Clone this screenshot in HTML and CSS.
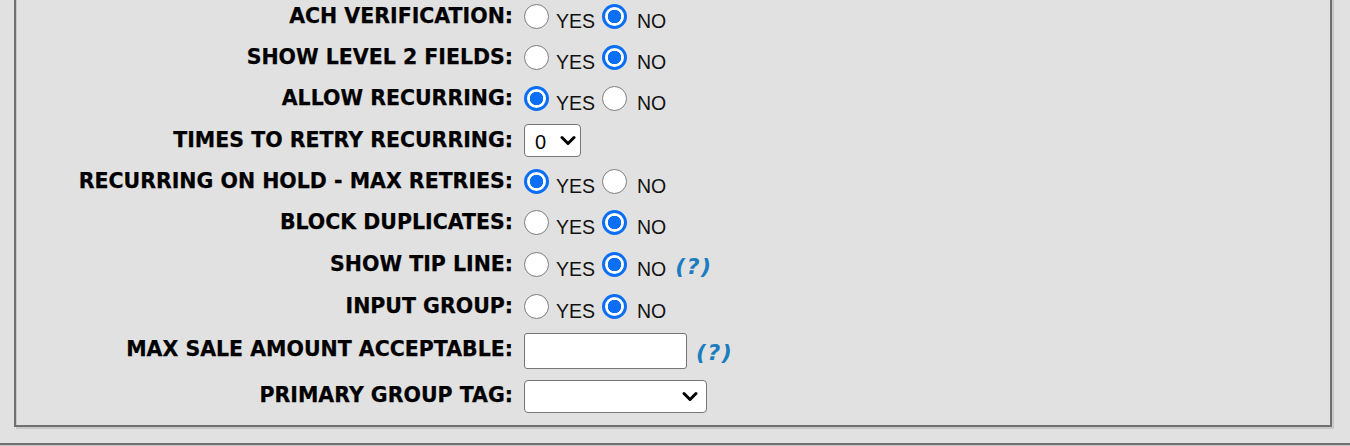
FILE: index.html
```html
<!DOCTYPE html>
<html>
<head>
<meta charset="utf-8">
<link rel="stylesheet" href="styles.css">
</head>
<body>
<div class="panel">
  <div class="form">
    <div class="label">ACH VERIFICATION:</div>
    <div class="ctrl"><input type="radio" name="ach" class="r-yes"><span class="opt">YES</span><input type="radio" name="ach" class="r-no" checked><span class="opt">NO</span></div>

    <div class="label">SHOW LEVEL 2 FIELDS:</div>
    <div class="ctrl"><input type="radio" name="l2" class="r-yes"><span class="opt">YES</span><input type="radio" name="l2" class="r-no" checked><span class="opt">NO</span></div>

    <div class="label">ALLOW RECURRING:</div>
    <div class="ctrl"><input type="radio" name="ar" class="r-yes" checked><span class="opt">YES</span><input type="radio" name="ar" class="r-no"><span class="opt">NO</span></div>

    <div class="label">TIMES TO RETRY RECURRING:</div>
    <div class="ctrl"><span class="sel sel-small"><select><option>0</option></select><svg class="chev" viewBox="0 0 16 11" width="16" height="11"><path d="M2 2.5 L8 8.5 L14 2.5" fill="none" stroke="#000" stroke-width="3" stroke-linecap="round" stroke-linejoin="round"/></svg></span></div>

    <div class="label">RECURRING ON HOLD - MAX RETRIES:</div>
    <div class="ctrl"><input type="radio" name="oh" class="r-yes" checked><span class="opt">YES</span><input type="radio" name="oh" class="r-no"><span class="opt">NO</span></div>

    <div class="label">BLOCK DUPLICATES:</div>
    <div class="ctrl"><input type="radio" name="bd" class="r-yes"><span class="opt">YES</span><input type="radio" name="bd" class="r-no" checked><span class="opt">NO</span></div>

    <div class="label">SHOW TIP LINE:</div>
    <div class="ctrl"><input type="radio" name="tl" class="r-yes"><span class="opt">YES</span><input type="radio" name="tl" class="r-no" checked><span class="opt">NO</span><a class="help help-after-text">(?)</a></div>

    <div class="label">INPUT GROUP:</div>
    <div class="ctrl"><input type="radio" name="ig" class="r-yes"><span class="opt">YES</span><input type="radio" name="ig" class="r-no" checked><span class="opt">NO</span></div>

    <div class="label">MAX SALE AMOUNT ACCEPTABLE:</div>
    <div class="ctrl"><input type="text" class="txt"><a class="help help-after-input">(?)</a></div>

    <div class="label">PRIMARY GROUP TAG:</div>
    <div class="ctrl"><span class="sel sel-wide"><select><option></option></select><svg class="chev" viewBox="0 0 16 11" width="16" height="11"><path d="M2 2.5 L8 8.5 L14 2.5" fill="none" stroke="#000" stroke-width="3" stroke-linecap="round" stroke-linejoin="round"/></svg></span></div>
  </div>
</div>
<div class="next-panel"></div>
</body>
</html>
```

FILE: styles.css
```css
html, body {
  margin: 0;
  padding: 0;
  background: #e1e1e1;
  overflow: hidden;
}

.panel {
  margin: -30px 18px 0 14px;
  border: 2px solid #707070;
  box-shadow: inset 1px 1px 0 #c8c8c8, 2px 2px 0 #c8c8c8;
  padding: 24px 0 7px 0;
}

.form {
  display: grid;
  grid-template-columns: 497px auto;
  grid-template-rows: 41px 41px 41px 42px 41px 41px 42px 42px 45px 46px;
  column-gap: 11px;
  align-items: center;
}

.label {
  text-align: right;
  font-family: "DejaVu Sans", Verdana, sans-serif;
  font-weight: bold;
  font-size: 20.5px;
  color: #000;
  white-space: nowrap;
  padding-bottom: 1px;
  -webkit-text-stroke: 0.25px #000;
}

.ctrl {
  display: flex;
  align-items: center;
  font-family: "Liberation Sans", Arial, sans-serif;
  font-size: 19.5px;
  color: #111;
}

.opt {
  padding-top: 9px;
  line-height: 20px;
}

input[type="radio"] {
  appearance: none;
  -webkit-appearance: none;
  width: 25px;
  height: 25px;
  margin: 0;
  border: 1.5px solid #7d7d7d;
  border-radius: 50%;
  background: #fff;
  box-sizing: border-box;
}

input[type="radio"]:checked {
  border: 3px solid #0b6ff5;
  background: radial-gradient(circle, #0b6ff5 0 6.4px, #fff 7px);
}

.r-yes {
  margin-right: 7px !important;
}

.r-no {
  margin-left: 7px !important;
  margin-right: 10px !important;
}

.sel {
  position: relative;
  display: inline-block;
}

.sel select {
  appearance: none;
  -webkit-appearance: none;
  display: block;
  margin: 0;
  border: 1px solid #767676;
  border-radius: 4px;
  background: #fff;
  font-family: "Liberation Sans", Arial, sans-serif;
  font-size: 20px;
  color: #000;
  box-sizing: border-box;
  padding: 0 0 0 10px;
}

.sel-small select {
  width: 57px;
  height: 33px;
  padding-top: 3px;
}

.sel-wide {
  margin-top: 2px;
}

.sel-wide select {
  width: 183px;
  height: 33px;
}

.chev {
  position: absolute;
  right: 9px;
  top: 11px;
  pointer-events: none;
}

.sel-small .chev {
  right: 5px;
}

.txt {
  width: 163px;
  height: 36px;
  margin: 3px 0 0 0;
  border: 1px solid #767676;
  border-radius: 3px;
  background: #fff;
  box-sizing: border-box;
}

.help {
  font-family: "DejaVu Sans", Verdana, sans-serif;
  font-weight: bold;
  font-style: italic;
  font-size: 22px;
  letter-spacing: 1.5px;
  color: #1b7cc0;
}

.help-after-text {
  margin-left: 9px;
  padding-top: 4px;
}

.help-after-input {
  margin-left: 9px;
  padding-top: 6px;
}

.next-panel {
  margin-top: 16px;
  height: 20px;
  border-top: 2px solid #707070;
  box-shadow: inset 0 1px 0 #c8c8c8;
}
```
